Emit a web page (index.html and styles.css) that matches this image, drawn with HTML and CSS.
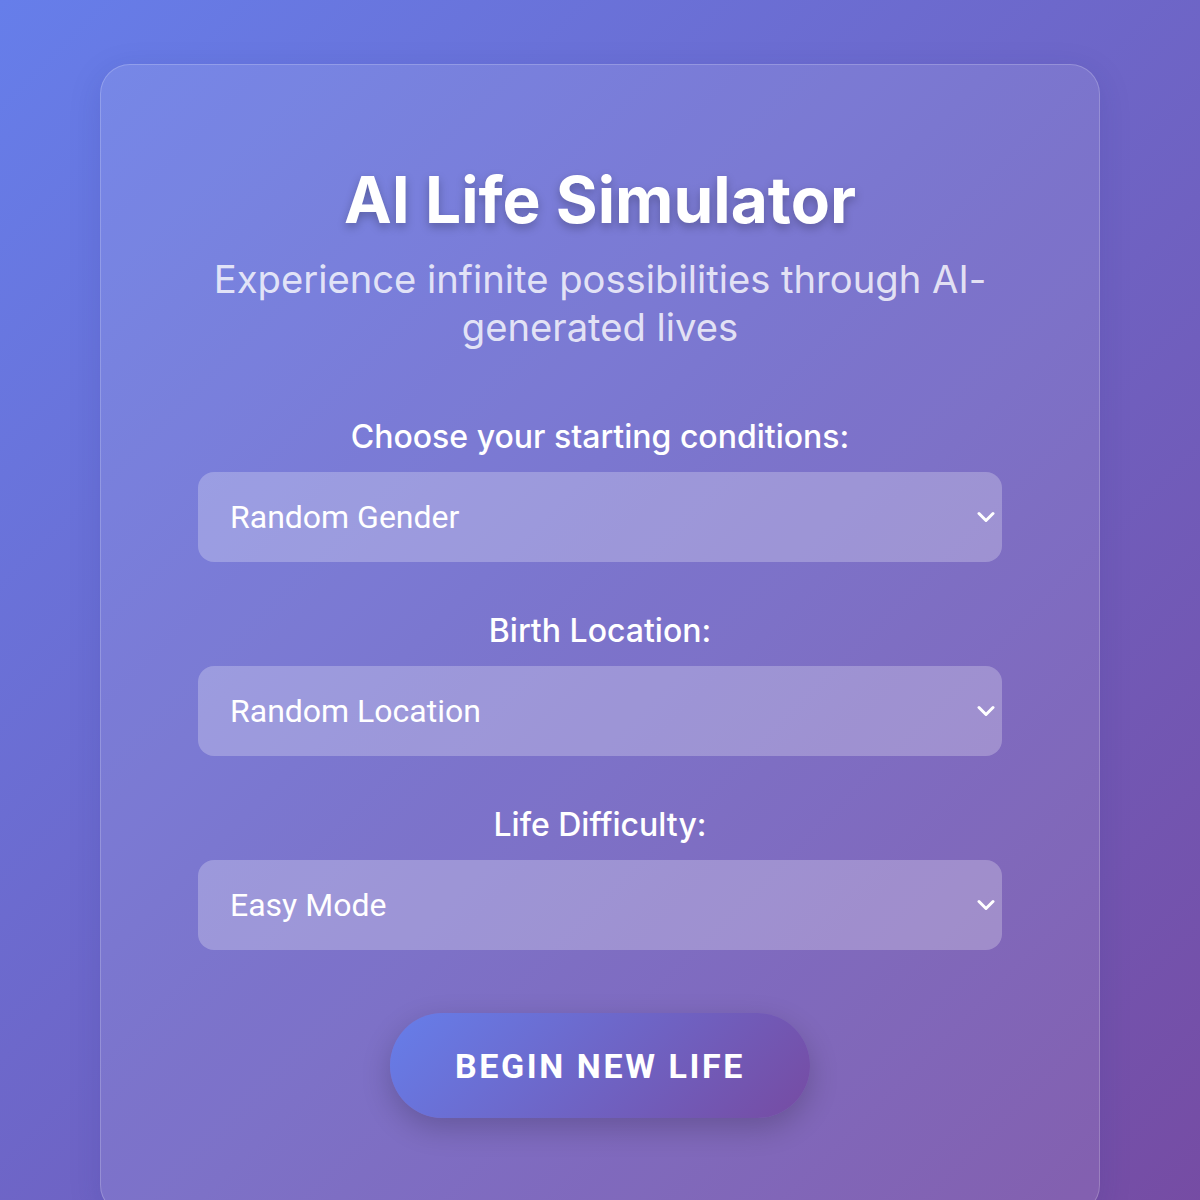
FILE: index.html
```html
<!DOCTYPE html>
<html lang="en">
<head>
<meta charset="utf-8">
<title>AI Life Simulator</title>
<link rel="stylesheet" href="styles.css">
</head>
<body>
<main class="page">
  <section class="card">
    <h1 class="title">AI Life Simulator</h1>
    <p class="subtitle">Experience infinite possibilities through AI-generated lives</p>
    <form class="form">
      <div class="group">
        <label class="label" for="gender">Choose your starting conditions:</label>
        <div class="select-wrap">
          <select id="gender" class="select">
            <option>Random Gender</option>
            <option>Male</option>
            <option>Female</option>
          </select>
          <svg class="chevron" viewBox="0 0 18 12" width="18" height="12" aria-hidden="true"><path d="M2 2.5 L9 9.5 L16 2.5" fill="none" stroke="#fff" stroke-width="3" stroke-linecap="round" stroke-linejoin="round"/></svg>
        </div>
      </div>
      <div class="group">
        <label class="label" for="location">Birth Location:</label>
        <div class="select-wrap">
          <select id="location" class="select">
            <option>Random Location</option>
          </select>
          <svg class="chevron" viewBox="0 0 18 12" width="18" height="12" aria-hidden="true"><path d="M2 2.5 L9 9.5 L16 2.5" fill="none" stroke="#fff" stroke-width="3" stroke-linecap="round" stroke-linejoin="round"/></svg>
        </div>
      </div>
      <div class="group">
        <label class="label" for="difficulty">Life Difficulty:</label>
        <div class="select-wrap">
          <select id="difficulty" class="select">
            <option>Easy Mode</option>
            <option>Normal Mode</option>
            <option>Hard Mode</option>
          </select>
          <svg class="chevron" viewBox="0 0 18 12" width="18" height="12" aria-hidden="true"><path d="M2 2.5 L9 9.5 L16 2.5" fill="none" stroke="#fff" stroke-width="3" stroke-linecap="round" stroke-linejoin="round"/></svg>
        </div>
      </div>
      <div class="actions">
        <button type="button" class="btn">Begin New Life</button>
      </div>
    </form>
  </section>
</main>
</body>
</html>
```
FILE: styles.css
```css
* { box-sizing: border-box; }

html, body {
  margin: 0;
  padding: 0;
}

body {
  min-height: 100vh;
  background: linear-gradient(135deg, #667eea 0%, #764ba2 100%);
  font-family: Inter, "Noto Sans", sans-serif;
  color: #fff;
}

.page {
  padding: 64px 20px 40px;
}

.card {
  max-width: 1000px;
  margin: 0 auto;
  padding: 96px 97px;
  background: rgba(255, 255, 255, 0.1);
  border: 1px solid rgba(255, 255, 255, 0.2);
  border-radius: 30px;
  box-shadow: 0 8px 32px rgba(31, 38, 135, 0.15);
  text-align: center;
}

.title {
  margin: 0 0 17px;
  font-size: 64px;
  font-weight: 700;
  line-height: normal;
  text-shadow: 0 4px 10px rgba(0, 0, 0, 0.25);
}

.subtitle {
  margin: 0 0 66px;
  font-size: 38.2px;
  font-weight: 400;
  line-height: 48px;
  color: rgba(255, 255, 255, 0.8);
}

.form {
  display: flex;
  flex-direction: column;
  gap: 49px;
}

.group {
  display: flex;
  flex-direction: column;
  gap: 16px;
}

.label {
  font-size: 32px;
  font-weight: 500;
  line-height: normal;
}

.select-wrap {
  position: relative;
}

.select {
  display: block;
  width: 100%;
  height: 90px;
  padding: 0 60px 0 32px;
  font-family: Roboto, "Liberation Sans", sans-serif;
  font-size: 32px;
  color: #fff;
  background: rgba(255, 255, 255, 0.25);
  border: none;
  border-radius: 16px;
  -webkit-appearance: none;
  appearance: none;
  outline: none;
}

.select option {
  color: #333;
}

.chevron {
  position: absolute;
  right: 7px;
  top: 50%;
  width: 18px;
  height: 12px;
  margin-top: -6px;
}

.actions {
  display: flex;
  justify-content: center;
  padding-top: 14px;
}

.btn {
  width: 420px;
  height: 105px;
  border: none;
  border-radius: 60px;
  background: linear-gradient(135deg, #667eea 0%, #764ba2 100%);
  color: #fff;
  font-family: Roboto, "Liberation Sans", sans-serif;
  font-size: 34px;
  font-weight: 700;
  letter-spacing: 2.6px;
  text-transform: uppercase;
  box-shadow: 0 10px 30px rgba(0, 0, 0, 0.2);
  cursor: pointer;
}
```
